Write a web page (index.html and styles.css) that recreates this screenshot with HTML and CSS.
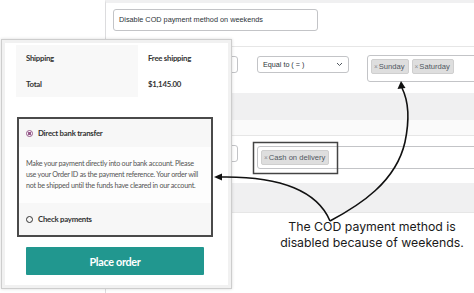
FILE: index.html
```html
<!DOCTYPE html>
<html lang="en">

<head>
    <meta charset="UTF-8">
    <meta name="viewport" content="width=device-width, initial-scale=1.0">
    <title>Disable COD on weekends</title>
    <link rel="stylesheet" href="styles.css">
</head>

<body>
    <div class="stage">

        <!-- admin rule screen (background) -->
        <div class="admin">
            <div class="title-row">
                <div class="text-field">Disable COD payment method on weekends</div>
            </div>

            <div class="rule-row">
                <div class="select select-left"></div>
                <div class="select select-op">
                    <span>Equal to ( = )</span>
                    <svg class="chevron" width="7" height="5" viewBox="0 0 7 5">
                        <path d="M1 1 L3.5 3.5 L6 1" fill="none" stroke="#50575e" stroke-width="1" />
                    </svg>
                </div>
                <div class="multi multi-days">
                    <span class="tag"><i>×</i>Sunday</span>
                    <span class="tag"><i>×</i>Saturday</span>
                </div>
            </div>

            <div class="band"></div>
            <div class="sub-band"></div>

            <div class="rule-row rule-row-two">
                <div class="select select-left"></div>
                <div class="multi multi-pay">
                    <span class="tag"><i>×</i>Cash on delivery</span>
                </div>
            </div>

            <div class="band band-low"></div>
        </div>

        <!-- storefront checkout (front) -->
        <div class="card">
            <table class="totals">
                <tr>
                    <th>Shipping</th>
                    <td>Free shipping</td>
                </tr>
                <tr>
                    <th>Total</th>
                    <td>$1,145.00</td>
                </tr>
            </table>

            <div class="payment">
                <div class="method">
                    <span class="radio checked"></span>
                    Direct bank transfer
                </div>
                <div class="method-desc">
                    Make your payment directly into our bank account. Please<br>
                    use your Order ID as the payment reference. Your order will<br>
                    not be shipped until the funds have cleared in our account.
                </div>
                <div class="method method-last">
                    <span class="radio"></span>
                    Check payments
                </div>
            </div>

            <button class="place-order">Place order</button>
        </div>

        <!-- annotation -->
        <svg class="notes" width="474" height="293" viewBox="0 0 474 293">
            <rect x="253.5" y="142.5" width="84" height="31" fill="none" stroke="#444" stroke-width="1.5" />
            <path d="M330 221 C360 205 396 182 405 142 C410 118 408 100 402 88" fill="none" stroke="#111" stroke-width="1.6" />
            <polygon points="401,81 397.5,89 405.5,88" fill="#111" />
            <path d="M330 221 C318 192 282 176 221 177" fill="none" stroke="#111" stroke-width="1.6" />
            <polygon points="214,177 222,173.5 222,180.5" fill="#111" />
        </svg>

        <p class="caption">The COD payment method is<br>disabled because of weekends.</p>
    </div>
</body>

</html>
```

FILE: styles.css
```css
body {
    margin: 0;
    background-color: #fff;
}

.stage {
    display: grid;
    width: 474px;
    height: 293px;
    overflow: hidden;
}

.stage > * {
    grid-area: 1 / 1;
}

/* ---------- admin screen ---------- */

.admin {
    margin-left: 105px;
    border-left: 1px solid #dcdcde;
    border-top: 3px solid #f0f0f1;
    background-color: #fff;
    overflow: hidden;
    font-family: 'Liberation Sans', Arial, sans-serif;
    color: #2c3338;
}

.title-row {
    height: 37px;
    padding: 6px 0 0 7px;
    border-bottom: 1px solid #e6e6e6;
}

.text-field {
    box-sizing: border-box;
    width: 205px;
    height: 22px;
    padding-left: 5px;
    border: 1px solid #c3c4c7;
    border-radius: 3px;
    font-size: 7.3px;
    line-height: 20px;
    white-space: nowrap;
}

.rule-row {
    display: flex;
    align-items: flex-start;
    gap: 19px;
    height: 38px;
    padding: 8px 0 0 52px;
}

.select {
    box-sizing: border-box;
    flex-shrink: 0;
    height: 17px;
    margin-top: 1px;
    padding-left: 5px;
    border: 1px solid #c3c4c7;
    border-radius: 3px;
    font-size: 7.2px;
    line-height: 15px;
    white-space: nowrap;
}

.select-left {
    width: 80px;
}

.select-op {
    display: flex;
    align-items: center;
    justify-content: space-between;
    width: 92px;
    padding-right: 5px;
    margin-right: -1px;
}

.multi {
    box-sizing: border-box;
    display: flex;
    align-items: flex-start;
    gap: 3px;
    flex-shrink: 0;
    width: 130px;
    height: 27px;
    padding: 3px;
    border: 1px solid #c3c4c7;
    border-radius: 3px;
}

.tag {
    height: 13px;
    padding: 0 3px 0 2px;
    border: 1px solid #cfcfcf;
    border-radius: 2px;
    background-color: #dedede;
    font-size: 7.6px;
    line-height: 13px;
    color: #50575e;
    white-space: nowrap;
}

.tag i {
    font-style: normal;
    font-size: 6.5px;
    margin-right: 1px;
    color: #8c8f94;
}

.band {
    height: 27px;
    background-color: #f0f0f1;
}

.sub-band {
    height: 15px;
    background-color: #fafafa;
    border-bottom: 1px solid #e6e6e6;
}

.rule-row-two {
    height: 39px;
}

.multi-pay {
    width: 220px;
    height: 23px;
    margin-top: 2px;
}

.band-low {
    height: 29px;
    border-bottom: 1px solid #e6e6e6;
}

/* ---------- checkout card ---------- */

.card {
    box-sizing: border-box;
    align-self: start;
    width: 231px;
    height: 250px;
    margin: 39px 0 0 1px;
    padding: 5px 0 0 14px;
    border: 1px solid #cdcdcd;
    background-color: #fff;
    box-shadow: inset 0 0 0 3px #f1f1f1, 0 0 3px rgba(0, 0, 0, 0.15);
    font-family: Lato, 'Open Sans', sans-serif;
    color: #333;
}

.totals {
    width: 197px;
    border-collapse: collapse;
    font-size: 7.8px;
    font-weight: bold;
    letter-spacing: -0.25px;
}

.totals th,
.totals td {
    height: 26px;
    padding: 0 0 0 10px;
    text-align: left;
}

.totals th {
    width: 112px;
    background-color: #f8f8f8;
}

.payment {
    width: 192px;
    margin: 20px 0 0 1px;
    border: 2px solid #4a4a4a;
    background-color: #f7f7f7;
}

.method {
    display: flex;
    align-items: center;
    gap: 5px;
    height: 28px;
    padding-left: 7px;
    font-size: 7.8px;
    font-weight: bold;
    letter-spacing: -0.25px;
}

.method-last {
    height: 32px;
}

.radio {
    box-sizing: border-box;
    width: 7px;
    height: 7px;
    border: 1.2px solid #333;
    border-radius: 50%;
}

.radio.checked {
    border-color: #96588a;
    background: radial-gradient(circle, #96588a 0 1.4px, transparent 1.8px);
}

.method-desc {
    height: 56px;
    box-sizing: border-box;
    padding: 11px 0 0 7px;
    background-color: #fdfdfd;
    font-size: 7.2px;
    line-height: 11.2px;
    letter-spacing: -0.25px;
    white-space: nowrap;
    color: #555;
}

.place-order {
    display: block;
    width: 178px;
    height: 28px;
    margin: 10px 0 0 10px;
    border: none;
    border-radius: 1px;
    background-color: #21978f;
    color: #fff;
    font-family: Lato, 'Open Sans', sans-serif;
    font-size: 10.8px;
    font-weight: bold;
    letter-spacing: -0.3px;
}

/* ---------- annotation ---------- */

.notes {
    z-index: 2;
}

.caption {
    z-index: 2;
    align-self: start;
    justify-self: start;
    width: 200px;
    margin: 219px 0 0 272px;
    font-family: Inter, 'Noto Sans', sans-serif;
    font-size: 12.3px;
    line-height: 16px;
    text-align: center;
    color: #1a1a1a;
}
```
